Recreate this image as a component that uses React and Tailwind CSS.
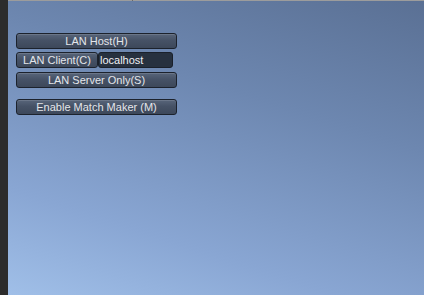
export default function App() {
  const btn =
    "h-[16px] flex items-center justify-center rounded-[3px] border border-[#1c222c] bg-[linear-gradient(180deg,#58657a_0%,#465266_45%,#3d485a_100%)] shadow-[inset_0_1px_0_rgba(255,255,255,0.12)] text-[11px] leading-none text-[#e4e6ea]";
  return (
    <div
      className="w-[424px] h-[295px] flex overflow-hidden"
      style={{ fontFamily: '"Liberation Sans", Arial, sans-serif' }}
    >
      <div className="w-[8px] h-full bg-[#2c2c2c]" />
      <div className="flex-1 flex flex-col">
        <div className="h-px bg-[#9c9c9c] flex">
          <div className="w-[124px]" />
          <div className="w-px bg-[#6a6a6a]" />
        </div>
        <div className="flex-1 bg-[linear-gradient(198deg,#5a7094_0%,#6d87b0_35%,#89a6d3_75%,#a0bfe8_100%)] pl-[8px] pt-[32px]">
          <div className="w-[161px] flex flex-col">
            <div className={btn}>LAN Host(H)</div>
            <div className="mt-[3px] flex h-[16px]">
              <div className={btn + " w-[82px]"}>LAN Client(C)</div>
              <div className="w-[75px] h-[16px] flex items-center rounded-[3px] border border-[#1a202a] bg-[#27313f] pl-px text-[11px] leading-none text-[#eef0f3]">
                localhost
              </div>
            </div>
            <div className={btn + " mt-[4px]"}>LAN Server Only(S)</div>
            <div className={btn + " mt-[11px]"}>Enable Match Maker (M)</div>
          </div>
        </div>
      </div>
    </div>
  );
}
